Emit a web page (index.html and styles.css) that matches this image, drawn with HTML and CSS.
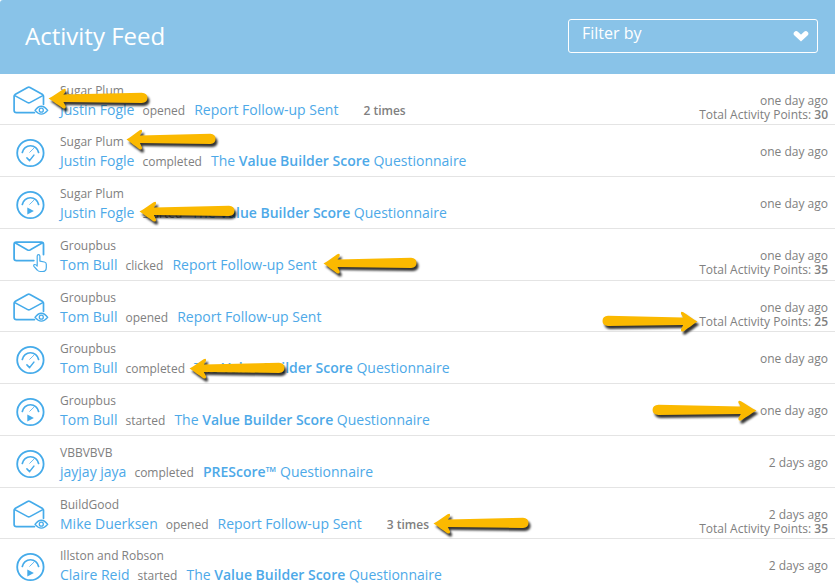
FILE: index.html
```html
<!DOCTYPE html>
<html lang="en">
<head>
  <meta charset="UTF-8" />
  <meta name="viewport" content="width=device-width, initial-scale=1.0" />
  <title>Activity Feed</title>
  <link rel="stylesheet" href="styles.css">
</head>
<body>
  <!-- Shared icons -->
  <svg class="sprite" aria-hidden="true">
    <symbol id="icon-opened" viewBox="0 0 36 30">
      <path d="M21.5 26.6H3.4Q1.1 26.6 1.1 24.4V10.2Q1.1 9.2 2 8.6L14.6 1.5Q15.8 .9 17 1.5L29.6 8.6Q30.5 9.2 30.5 10.2V18.3" stroke-width="1.7" />
      <path d="M1.8 9.6L14.7 16.6Q15.8 17.2 16.9 16.6L29.8 9.6" stroke-width="1.6" />
      <path d="M22 24.4Q28.3 16.2 34.7 24.4Q28.3 31.8 22 24.4Z" stroke-width="1.4" />
      <circle cx="28.3" cy="24.2" r="2" stroke-width="1.3" />
    </symbol>
    <symbol id="icon-clicked" viewBox="0 0 36 32">
      <path d="M20.8 19.6H3.4Q1.1 19.6 1.1 17.4V3.4Q1.1 1.2 3.4 1.2H28.2Q30.5 1.2 30.5 3.4V13.5" stroke-width="1.8" />
      <path d="M2 1.8L14.6 9Q15.8 9.6 17 9L29.6 1.8" stroke-width="1.6" />
      <path d="M24.2 24.2V15.3Q24.2 13.7 25.5 13.7Q26.9 13.7 26.9 15.3V20.1L31.4 21Q33.3 21.4 33.3 23.3V26.4Q33.3 30.5 29.3 30.5H27.3Q25.4 30.5 24.2 29L20.9 25.3Q20.3 23.8 21.7 23.5Q22.6 23.3 24.2 25" stroke-width="1.2" />
    </symbol>
    <symbol id="icon-completed" viewBox="0 0 30 30">
      <circle cx="15.4" cy="15" r="13.2" stroke-width="1.8" />
      <path d="M7.3 14.5A8.3 8.3 0 0 1 23.6 14.5" stroke-width="1.7" />
      <path d="M14.7 14.3L18.8 10.3" stroke-width=".8" />
      <path d="M11.9 19.9L14.6 22.6L18.9 17.1" stroke-width="1.5" />
    </symbol>
    <symbol id="icon-started" viewBox="0 0 30 30">
      <circle cx="15.4" cy="15" r="13.2" stroke-width="1.8" />
      <path d="M7.3 14.5A8.3 8.3 0 0 1 23.6 14.5" stroke-width="1.7" />
      <path d="M14.7 14.3L18.8 10.3" stroke-width=".8" />
      <path d="M12.3 17.5V24.5L18.9 21Z" fill="currentColor" stroke="none" />
    </symbol>
    <symbol id="arrow" viewBox="0 0 96 22" preserveAspectRatio="none">
      <path d="M.5 10.6C5 8 10.5 4 14.6 1.2Q17.5-.5 17 3L14.8 6.6L90 4.8Q95.5 5.3 95.5 9.9Q95.5 14.4 90 14.9L14.8 14L17 18.2Q17.4 21.6 14.2 20.2C10 17.5 5 13.5.5 10.6Z" />
    </symbol>
  </svg>

  <header class="feed-header">
    <h1>Activity Feed</h1>
    <div class="filter">
      <select id="filterBy" aria-label="Filter by">
        <option>Filter by</option>
      </select>
      <svg class="filter-chevron" viewBox="0 0 16 12" aria-hidden="true"><path d="M3.2 3.6L8 8L12.8 3.6" /></svg>
    </div>
  </header>

  <main>
    <ul class="feed">
      <li class="feed-item opened">
        <svg class="icon"><use href="#icon-opened" /></svg>
        <div class="details">
          <p class="company">Sugar Plum</p>
          <p class="activity"><a href="#">Justin Fogle</a><span class="action">opened</span><a href="#">Report Follow-up Sent</a><span class="count">2 times</span></p>
        </div>
        <div class="meta"><p>one day ago</p><p>Total Activity Points: <b>30</b></p></div>
      </li>
      <li class="feed-item">
        <svg class="icon gauge"><use href="#icon-completed" /></svg>
        <div class="details">
          <p class="company">Sugar Plum</p>
          <p class="activity"><a href="#">Justin Fogle</a><span class="action">completed</span><a href="#">The <b>Value Builder Score</b> Questionnaire</a></p>
        </div>
        <div class="meta"><p>one day ago</p></div>
      </li>
      <li class="feed-item">
        <svg class="icon gauge"><use href="#icon-started" /></svg>
        <div class="details">
          <p class="company">Sugar Plum</p>
          <p class="activity"><a href="#">Justin Fogle</a><span class="action">started</span><a href="#">The <b>Value Builder Score</b> Questionnaire</a></p>
        </div>
        <div class="meta"><p>one day ago</p></div>
      </li>
      <li class="feed-item">
        <svg class="icon clicked"><use href="#icon-clicked" /></svg>
        <div class="details">
          <p class="company">Groupbus</p>
          <p class="activity"><a href="#">Tom Bull</a><span class="action">clicked</span><a href="#">Report Follow-up Sent</a></p>
        </div>
        <div class="meta"><p>one day ago</p><p>Total Activity Points: <b>35</b></p></div>
      </li>
      <li class="feed-item opened">
        <svg class="icon"><use href="#icon-opened" /></svg>
        <div class="details">
          <p class="company">Groupbus</p>
          <p class="activity"><a href="#">Tom Bull</a><span class="action">opened</span><a href="#">Report Follow-up Sent</a></p>
        </div>
        <div class="meta"><p>one day ago</p><p>Total Activity Points: <b>25</b></p></div>
      </li>
      <li class="feed-item">
        <svg class="icon gauge"><use href="#icon-completed" /></svg>
        <div class="details">
          <p class="company">Groupbus</p>
          <p class="activity"><a href="#">Tom Bull</a><span class="action">completed</span><a href="#">The <b>Value Builder Score</b> Questionnaire</a></p>
        </div>
        <div class="meta"><p>one day ago</p></div>
      </li>
      <li class="feed-item">
        <svg class="icon gauge"><use href="#icon-started" /></svg>
        <div class="details">
          <p class="company">Groupbus</p>
          <p class="activity"><a href="#">Tom Bull</a><span class="action">started</span><a href="#">The <b>Value Builder Score</b> Questionnaire</a></p>
        </div>
        <div class="meta"><p>one day ago</p></div>
      </li>
      <li class="feed-item">
        <svg class="icon gauge"><use href="#icon-completed" /></svg>
        <div class="details">
          <p class="company">VBBVBVB</p>
          <p class="activity"><a href="#">jayjay jaya</a><span class="action">completed</span><a href="#"><b>PREScore™</b> Questionnaire</a></p>
        </div>
        <div class="meta"><p>2 days ago</p></div>
      </li>
      <li class="feed-item opened">
        <svg class="icon"><use href="#icon-opened" /></svg>
        <div class="details">
          <p class="company">BuildGood</p>
          <p class="activity"><a href="#">Mike Duerksen</a><span class="action">opened</span><a href="#">Report Follow-up Sent</a><span class="count">3 times</span></p>
        </div>
        <div class="meta"><p>2 days ago</p><p>Total Activity Points: <b>35</b></p></div>
      </li>
      <li class="feed-item">
        <svg class="icon gauge"><use href="#icon-started" /></svg>
        <div class="details">
          <p class="company">Illston and Robson</p>
          <p class="activity"><a href="#">Claire Reid</a><span class="action">started</span><a href="#">The <b>Value Builder Score</b> Questionnaire</a></p>
        </div>
        <div class="meta"><p>2 days ago</p></div>
      </li>
    </ul>
  </main>

  <!-- Callout arrows drawn over the feed -->
  <div class="callouts" aria-hidden="true">
    <svg class="arrow to-icon"><use href="#arrow" /></svg>
    <svg class="arrow to-company"><use href="#arrow" /></svg>
    <svg class="arrow to-person"><use href="#arrow" /></svg>
    <svg class="arrow to-report"><use href="#arrow" /></svg>
    <svg class="arrow to-action"><use href="#arrow" /></svg>
    <svg class="arrow to-count"><use href="#arrow" /></svg>
    <svg class="arrow to-points"><g class="flip"><use href="#arrow" /></g></svg>
    <svg class="arrow to-time"><g class="flip"><use href="#arrow" /></g></svg>
  </div>
</body>
</html>
```

FILE: styles.css
```css
* {
  box-sizing: border-box;
}
body {
  font-family: 'Open Sans', sans-serif;
  background-color: #fff;
  color: #808080;
  margin: 0;
  height: 100vh;
  position: relative;
  overflow: hidden;
}
h1, p, ul {
  margin: 0;
  padding: 0;
}
a {
  color: #4da9e8;
  text-decoration: none;
}
b {
  font-weight: 600;
}
.sprite {
  position: absolute;
  width: 0;
  height: 0;
}

/* header */
.feed-header {
  display: flex;
  align-items: center;
  justify-content: space-between;
  height: 74px;
  padding: 0 17px 2px 25px;
  background-color: #89c3e8;
  border-top-left-radius: 3px;
  color: #fff;
}
.feed-header h1 {
  font-size: 24px;
  font-weight: 400;
  line-height: 32px;
}
.filter {
  position: relative;
  width: 250px;
}
.filter select {
  display: block;
  appearance: none;
  width: 100%;
  height: 34px;
  padding: 0 36px 6px 13px;
  border: 1px solid #fff;
  border-radius: 3px;
  background: transparent;
  color: #fff;
  font-family: inherit;
  font-size: 16px;
}
.filter-chevron {
  position: absolute;
  top: 11px;
  right: 9px;
  width: 16px;
  height: 12px;
  fill: none;
  stroke: #fff;
  stroke-width: 5;
  stroke-linecap: round;
  pointer-events: none;
}

/* feed */
.feed {
  list-style: none;
}
.feed-item {
  display: flex;
  align-items: flex-start;
  height: 52px;
  padding: 0 7px 0 13px;
  border-bottom: 1px solid #e4e4e4;
}
.feed-item.opened {
  height: 51px;
}
.icon {
  flex: none;
  width: 36px;
  height: 30px;
  margin: 12px 11px 0 0;
  color: #45abea;
  fill: none;
  stroke: #45abea;
  stroke-linecap: round;
  stroke-linejoin: round;
}
.icon.clicked {
  height: 32px;
}
.icon.gauge {
  width: 30px;
  margin: 13px 15px 0 2px;
}
.details {
  flex: 1;
  padding-top: 8px;
}
.company {
  font-size: 12px;
  line-height: 18px;
}
.activity {
  font-size: 14px;
  line-height: 19px;
  white-space: nowrap;
}
.action {
  margin: 0 9px 0 8px;
  font-size: 12px;
}
.count {
  margin-left: 25px;
  font-size: 12px;
  font-weight: 600;
}
.meta {
  padding-top: 20px;
  font-size: 12px;
  line-height: 14px;
  text-align: right;
}

/* callout arrows */
.arrow {
  position: absolute;
  width: 96px;
  height: 22px;
  fill: #fbb900;
  overflow: visible;
  filter: drop-shadow(2px 3px 1px rgba(0, 0, 0, 0.8));
}
.flip {
  transform: scaleX(-1);
  transform-origin: center;
}
.to-icon {
  top: 88px;
  left: 48px;
  width: 100px;
}
.to-company {
  top: 129px;
  left: 126px;
  width: 90px;
}
.to-person {
  top: 201px;
  left: 139px;
}
.to-report {
  top: 253px;
  left: 323px;
  width: 94px;
}
.to-action {
  top: 358px;
  left: 189px;
}
.to-count {
  top: 513px;
  left: 433px;
}
.to-points {
  top: 311px;
  right: 137px;
}
.to-time {
  top: 400px;
  right: 78px;
  width: 105px;
}
```
